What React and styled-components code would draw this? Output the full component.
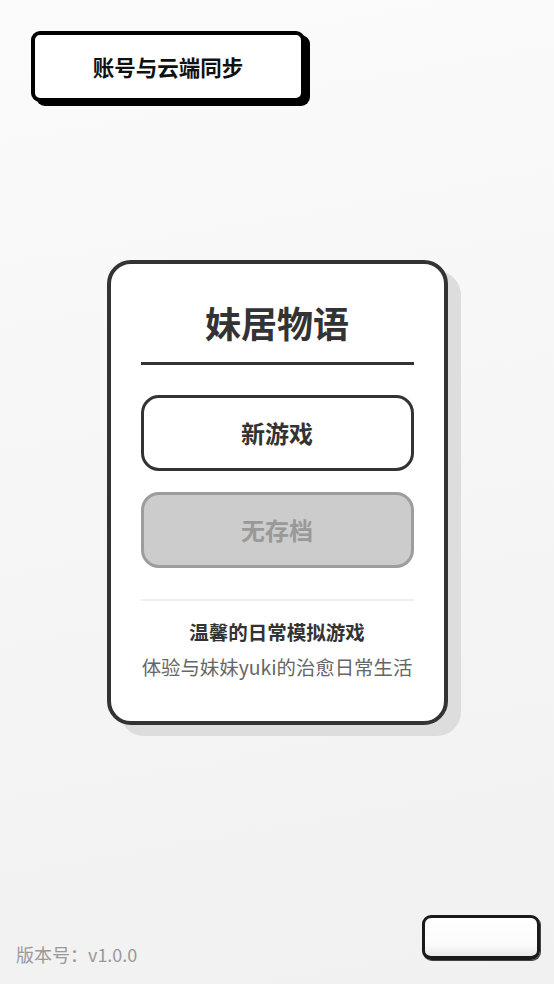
import React from "react";
import styled, { createGlobalStyle } from "styled-components";

const GlobalStyle = createGlobalStyle`
  html, body {
    margin: 0;
    padding: 0;
  }
  body {
    font-family: "Noto Sans CJK SC", "Noto Sans", sans-serif;
    background: #f6f6f6;
  }
`;

const Page = styled.div`
  width: 554px;
  height: 984px;
  display: grid;
  grid-template-rows: 1fr auto 1fr;
  background: linear-gradient(170deg, #fbfbfb 0%, #f5f5f5 55%, #f1f1f1 100%);
  overflow: hidden;
`;

const TopBar = styled.div`
  padding: 31px 0 0 31px;
  display: flex;
  align-items: flex-start;
`;

const SyncButton = styled.button`
  width: 274px;
  height: 71px;
  box-sizing: border-box;
  border: 4px solid #000;
  border-radius: 9px;
  background: #fff;
  box-shadow: 5px 4px 0 #000;
  font-family: inherit;
  font-size: 21.5px;
  font-weight: 700;
  color: #111;
  cursor: pointer;
`;

const Center = styled.div`
  display: flex;
  justify-content: center;
`;

const Card = styled.div`
  width: 341px;
  box-sizing: border-box;
  border: 4px solid #333;
  border-radius: 24px;
  background: #fff;
  box-shadow: 13px 11px 0 #dddddd;
  padding: 37px 30px 40px;
  display: flex;
  flex-direction: column;
`;

const Title = styled.h1`
  margin: 0;
  padding-bottom: 18px;
  border-bottom: 3px solid #333;
  text-align: center;
  font-size: 36px;
  line-height: 43px;
  font-weight: 700;
  color: #333;
`;

const Menu = styled.div`
  display: flex;
  flex-direction: column;
  gap: 21px;
  margin-top: 30px;
`;

const MenuButton = styled.button`
  height: 76px;
  box-sizing: border-box;
  border: 3px solid ${(p) => (p.disabled ? "#9d9d9d" : "#333")};
  border-radius: 18px;
  background: ${(p) => (p.disabled ? "#cccccc" : "#fff")};
  color: ${(p) => (p.disabled ? "#999" : "#333")};
  font-family: inherit;
  font-size: 24px;
  font-weight: 700;
  cursor: ${(p) => (p.disabled ? "default" : "pointer")};
`;

const Info = styled.div`
  margin-top: 31px;
  padding-top: 17px;
  border-top: 2px solid #eeeeee;
  text-align: center;
`;

const Tagline = styled.div`
  font-size: 19.5px;
  line-height: 28px;
  font-weight: 700;
  color: #333;
`;

const Desc = styled.div`
  margin-top: 7px;
  font-size: 19.4px;
  line-height: 28px;
  color: #666;
`;

const Footer = styled.div`
  display: flex;
  align-items: flex-end;
  justify-content: space-between;
  padding: 0 14px 24px 16px;
`;

const Version = styled.span`
  font-size: 18px;
  line-height: 20px;
  color: #999;
  margin-bottom: -4px;
`;

const SmallButton = styled.button`
  width: 118px;
  height: 45px;
  box-sizing: border-box;
  border: 3px solid #1a1a1a;
  border-bottom-width: 4px;
  border-radius: 9px;
  background: linear-gradient(180deg, #ffffff 0%, #fbfbfb 70%, #e9e9e9 100%);
  box-shadow: 1px 1px 0 #444;
  cursor: pointer;
`;

export default function App() {
  return (
    <>
      <GlobalStyle />
      <Page>
        <TopBar>
          <SyncButton>账号与云端同步</SyncButton>
        </TopBar>
        <Center>
          <Card>
            <Title>妹居物语</Title>
            <Menu>
              <MenuButton>新游戏</MenuButton>
              <MenuButton disabled>无存档</MenuButton>
            </Menu>
            <Info>
              <Tagline>温馨的日常模拟游戏</Tagline>
              <Desc>体验与妹妹yuki的治愈日常生活</Desc>
            </Info>
          </Card>
        </Center>
        <Footer>
          <Version>版本号：v1.0.0</Version>
          <SmallButton aria-label="more" />
        </Footer>
      </Page>
    </>
  );
}
